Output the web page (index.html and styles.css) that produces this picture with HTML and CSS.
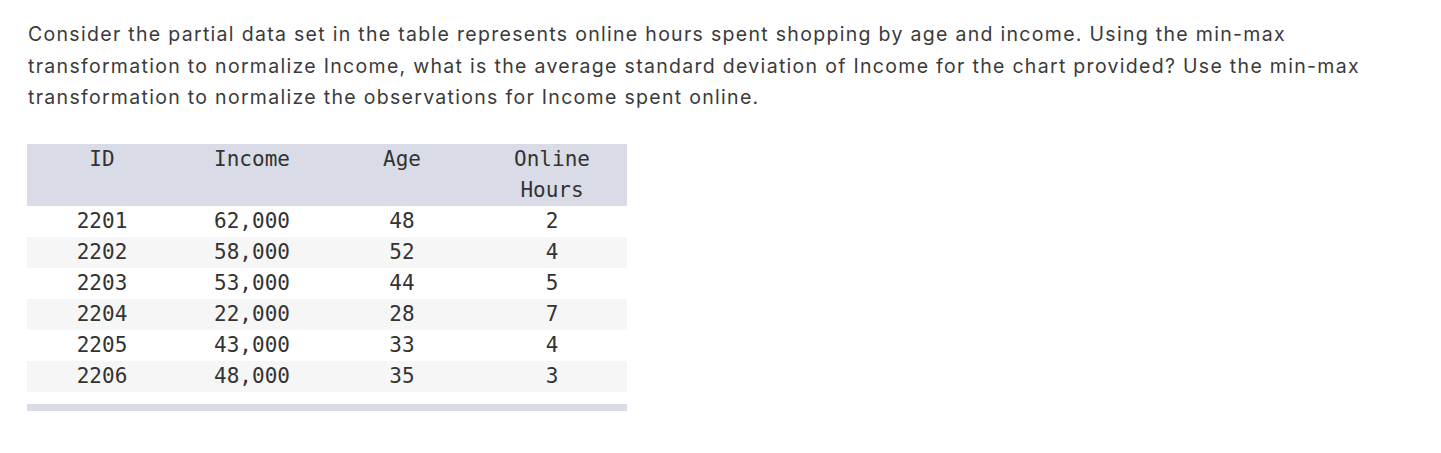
FILE: index.html
```html
<!DOCTYPE html>
<html>
<head>
<meta charset="utf-8">
<link rel="stylesheet" href="styles.css">
</head>
<body>
<div class="page">
  <p class="question">Consider the partial data set in the table represents online hours spent shopping by age and income. Using the min-max transformation to normalize Income, what is the average standard deviation of Income for the chart provided? Use the min-max transformation to normalize the observations for Income spent online.</p>
  <div class="table-wrap">
    <table class="data">
      <thead>
        <tr><th>ID</th><th>Income</th><th>Age</th><th>Online<br>Hours</th></tr>
      </thead>
      <tbody>
        <tr><td>2201</td><td>62,000</td><td>48</td><td>2</td></tr>
        <tr><td>2202</td><td>58,000</td><td>52</td><td>4</td></tr>
        <tr><td>2203</td><td>53,000</td><td>44</td><td>5</td></tr>
        <tr><td>2204</td><td>22,000</td><td>28</td><td>7</td></tr>
        <tr><td>2205</td><td>43,000</td><td>33</td><td>4</td></tr>
        <tr><td>2206</td><td>48,000</td><td>35</td><td>3</td></tr>
      </tbody>
    </table>
    <div class="footer-bar"></div>
  </div>
</div>
</body>
</html>
```
FILE: styles.css
```css
html, body {
  margin: 0;
  padding: 0;
  background: #ffffff;
}
.page {
  padding: 19px 0 0 28px;
}
.question {
  margin: 0;
  width: 1345px;
  font-family: "Inter", "Open Sans", sans-serif;
  font-size: 19.5px;
  letter-spacing: 1.3px;
  line-height: 31.5px;
  color: #3a3a3a;
}
.table-wrap {
  margin-top: 30px;
  margin-left: -1px;
  width: 600px;
}
.data {
  width: 600px;
  border-collapse: collapse;
  table-layout: fixed;
  font-family: "DejaVu Sans Mono", "Liberation Mono", monospace;
  font-size: 21px;
  line-height: 31px;
  color: #333333;
}
.data th, .data td {
  width: 150px;
  padding: 0;
  text-align: center;
  font-weight: normal;
  vertical-align: top;
}
.data thead tr {
  background: #d9dce6;
}
.data tbody tr:nth-child(even) {
  background: #f6f6f6;
}
.footer-bar {
  margin-top: 12px;
  height: 7px;
  background: #d9dce6;
}
```
